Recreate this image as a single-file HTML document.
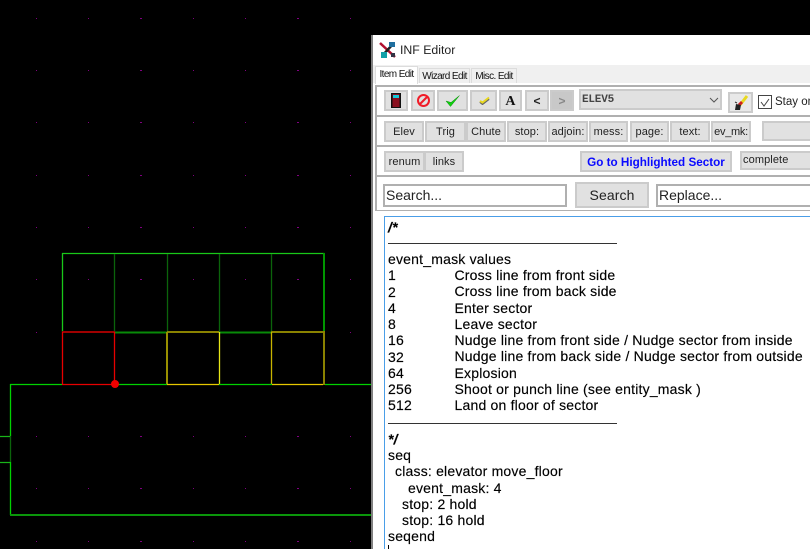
<!DOCTYPE html>
<html><head><meta charset="utf-8"><style>
html,body{margin:0;padding:0;background:#000}
#r{position:relative;width:810px;height:549px;overflow:hidden;background:#000;font-family:"Liberation Sans",sans-serif;color:#111}
#r div{position:absolute;box-sizing:border-box}
.b{background:#e1e1e1;border:2px solid #cbcbcb;text-align:center;font-size:11px;letter-spacing:.1px;line-height:19px;white-space:nowrap;overflow:hidden;color:#222}
.h{background:#b0b0b0;height:2px;left:375px;width:435px}
.tab{font-size:10px;letter-spacing:-.6px;text-align:center;white-space:nowrap;border:1px solid #dcdcdc;border-bottom:0}
.t{font-size:14px;line-height:16.25px;white-space:pre;letter-spacing:.2px;color:#000;-webkit-text-stroke:.15px #000}
svg{position:absolute}
</style></head><body><div id="r">
<svg width="372" height="549" style="left:0;top:0">
<defs><g id="d" fill="#800080" shape-rendering="crispEdges"><rect x="36" y="0" width="1" height="1"/><rect x="88" y="0" width="1" height="1"/><rect x="140" y="0" width="2" height="1"/><rect x="193" y="0" width="1" height="1"/><rect x="245" y="0" width="1" height="1"/><rect x="297" y="0" width="2" height="1"/><rect x="350" y="0" width="1" height="1"/></g></defs>
<use href="#d" y="18"/><use href="#d" y="70"/><use href="#d" y="122"/><use href="#d" y="175"/><use href="#d" y="227"/><use href="#d" y="279"/><use href="#d" y="332"/><use href="#d" y="436"/><use href="#d" y="488"/><use href="#d" y="541"/>
<g fill="none" stroke-width="1.3">
<path d="M62 253.5H324.500M62.500 253V332" stroke="#19c819"/>
<path d="M114.500 254V332M167.500 254V332M219.500 254V332M271.500 254V332" stroke="#0b640b"/>
<path d="M324 253V332" stroke="#009600" stroke-width="2"/>
<path d="M114 332.500H167M219 332.500H272" stroke="#088a08" stroke-width="2"/>
<path d="M62 332H115" stroke="#a00000" stroke-width="2"/>
<path d="M167 332H219M271 332H325" stroke="#8a8200" stroke-width="2"/>
<path d="M62.500 332V384M114.500 332V384M62 384.500H115" stroke="#e60000"/>
<path d="M167 332V384" stroke="#999000" stroke-width="2"/>
<path d="M219.500 332V384" stroke="#e6e619"/>
<path d="M271.500 332V384" stroke="#c8b400"/>
<path d="M324 332V385" stroke="#8a8200" stroke-width="2"/>
<path d="M167 384.500H219M272 384.500H323" stroke="#e6c800"/>
<path d="M10 384.500H62M115 384.500H167M219 384.500H272M325 384.500H372" stroke="#00d200"/>
<path d="M10.500 384V436M10.500 462V515" stroke="#00d200"/>
<path d="M10.500 436V462" stroke="#0b640b"/>
<path d="M0 436.500H10M0 462.500H10" stroke="#19b419"/>
<path d="M10 515H372" stroke="#0a960a" stroke-width="2"/>
</g>
</svg>
<svg width="12" height="12" style="left:108.500px;top:378px"><circle cx="6" cy="6" r="4" fill="#f00000"/></svg>

<div style="left:371px;top:35px;width:439px;height:514px;background:#fff;border-left:2px solid #808080"></div>
<div style="left:373px;top:65px;width:437px;height:18px;background:#f0f0f0"></div>
<svg width="18" height="18" viewBox="0 0 18 18" style="left:379px;top:41px">
<path d="M1 2L16 16" stroke="#b01030" stroke-width="2.500"/><path d="M3 15L14 3" stroke="#222" stroke-width="2.500"/>
<rect x="10" y="1" width="6" height="5" fill="#1f6f9f"/><rect x="2" y="11" width="6" height="6" fill="#12a0a8"/><rect x="12" y="12" width="4" height="4" fill="#334"/></svg>
<div style="left:400px;top:43px;font-size:12.300px;line-height:15px;color:#222;white-space:nowrap">INF Editor</div>
<div class="tab" style="left:375px;top:66px;width:43px;height:18px;background:#fff;line-height:16px">Item Edit</div>
<div class="tab" style="left:419px;top:68px;width:51px;height:15px;background:#f0f0f0;line-height:15px">Wizard Edit</div>
<div class="tab" style="left:471px;top:68px;width:46px;height:15px;background:#f0f0f0;line-height:15px">Misc. Edit</div>

<div style="left:375px;top:85px;width:2px;height:126px;background:#b0b0b0"></div>
<div class="h" style="top:85px"></div>
<div class="h" style="top:115px"></div>
<div class="h" style="top:145px"></div>
<div class="h" style="top:175px"></div>
<div style="left:375px;top:210px;width:435px;height:1px;background:#b0b0b0"></div>

<div class="b" style="left:384px;top:90px;width:24px;height:21px"></div>
<svg width="12" height="15" style="left:390px;top:93px"><rect x="1" y="0" width="10" height="15" fill="#111"/><rect x="2.500" y="1" width="7" height="13" fill="#8a1020"/><rect x="3" y="2" width="6" height="3" fill="#18c8d8"/></svg>
<div class="b" style="left:411px;top:90px;width:24px;height:21px"></div>
<svg width="15" height="15" style="left:415.500px;top:92.500px"><circle cx="7.500" cy="7.500" r="5.500" fill="none" stroke="#f01c28" stroke-width="2"/><path d="M3.500 11.500L11.500 3.500" stroke="#f01c28" stroke-width="2"/></svg>
<div class="b" style="left:437px;top:90px;width:31px;height:21px"></div>
<svg width="16" height="14" style="left:445px;top:94px"><path d="M1 7L5.500 12.500L14.500 1.500L6 8.500Z" fill="#10d010" stroke="#0a900a" stroke-width=".5"/></svg>
<div class="b" style="left:470px;top:90px;width:27px;height:21px"></div>
<svg width="11" height="9" style="left:478.500px;top:96px"><path d="M1 6L3.500 8L10 3" fill="none" stroke="#666" stroke-width="2"/><path d="M1 5L3.500 6.500L10 1.500" fill="none" stroke="#e8d820" stroke-width="2"/></svg>
<div class="b" style="left:499px;top:90px;width:23px;height:21px;font:bold 14px/19px 'Liberation Serif',serif;color:#111">A</div>
<div class="b" style="left:525px;top:90px;width:24px;height:21px;font-weight:bold;font-size:12px">&lt;</div>
<div class="b" style="left:550px;top:90px;width:24px;height:21px;background:#c8c8c8;color:#888;font-weight:bold;font-size:12px">&gt;</div>
<div class="b" style="left:579px;top:89px;width:143px;height:21px;text-align:left;padding-left:1px;font:bold 11px/18px 'Liberation Mono',monospace;letter-spacing:-.2px;color:#444">ELEV5</div>
<svg width="10" height="6" style="left:709px;top:97px"><path d="M1 1L5 5L9 1" fill="none" stroke="#555"/></svg>
<div class="b" style="left:728px;top:92px;width:25px;height:21px;background:#e8e8e8"></div>
<svg width="16" height="16" style="left:733px;top:95px"><path d="M7 10L14 1" stroke="#e8d820" stroke-width="3"/><path d="M6 10L9 7" stroke="#d02020" stroke-width="3"/><path d="M2 15L3 9L8 10L7 15Z" fill="#222"/><path d="M2 7L4 8" stroke="#333"/></svg>
<div style="left:758px;top:95px;width:14px;height:14px;border:1px solid #444;background:#fff"></div>
<svg width="10" height="9" style="left:760px;top:98px"><path d="M1 4L4 8L9 1" fill="none" stroke="#444"/></svg>
<div style="left:775px;top:95px;font-size:11.500px;line-height:15px;white-space:nowrap;color:#222">Stay on</div>

<div class="b" style="left:384px;top:121px;width:40px;height:21px">Elev</div>
<div class="b" style="left:425px;top:121px;width:41px;height:21px">Trig</div>
<div class="b" style="left:466px;top:121px;width:40px;height:21px">Chute</div>
<div class="b" style="left:507px;top:121px;width:40px;height:21px">stop:</div>
<div class="b" style="left:548px;top:121px;width:40px;height:21px">adjoin:</div>
<div class="b" style="left:589px;top:121px;width:39px;height:21px">mess:</div>
<div class="b" style="left:630px;top:121px;width:39px;height:21px">page:</div>
<div class="b" style="left:670px;top:121px;width:40px;height:21px">text:</div>
<div class="b" style="left:711px;top:121px;width:40px;height:21px;letter-spacing:-.3px">ev_mk:</div>
<div class="b" style="left:762px;top:121px;width:60px;height:20px"></div>

<div class="b" style="left:384px;top:151px;width:41px;height:21px">renum</div>
<div class="b" style="left:424px;top:151px;width:40px;height:21px">links</div>
<div class="b" style="left:580px;top:151px;width:152px;height:21px;color:#0a0aff;font-weight:bold;font-size:11.700px;letter-spacing:0">Go to Highlighted Sector</div>
<div class="b" style="left:740px;top:151px;width:80px;height:19px;text-align:left;padding-left:1px;line-height:15px;font-size:11px">complete</div>

<div style="left:383px;top:184px;width:184px;height:23px;border:2px solid #b0b0b0;background:#fff;font-size:14px;line-height:18px;padding-left:1px;color:#222">Search...</div>
<div class="b" style="left:575px;top:182px;width:74px;height:26px;font-size:14px;line-height:23px;color:#222">Search</div>
<div style="left:656px;top:184px;width:170px;height:23px;border:2px solid #b0b0b0;background:#fff;font-size:14px;line-height:18px;padding-left:1px;color:#222">Replace...</div>

<div style="left:384px;top:216px;width:440px;height:340px;border:1px solid #4a9ee8;border-right:0;background:#fff"></div>
<div class="t" style="left:388px;top:219px;font-weight:bold;font-style:italic">/*</div>
<div style="left:388px;top:243px;width:229px;height:1px;background:#333"></div>
<div class="t" style="left:388px;top:251px">event_mask values
1
2
4
8
16
32
64
256
512</div>
<div class="t" style="left:454.500px;top:267px">Cross line from front side
Cross line from back side
Enter sector
Leave sector
Nudge line from front side / Nudge sector from inside
Nudge line from back side / Nudge sector from outside
Explosion
Shoot or punch line (see entity_mask )
Land on floor of sector</div>
<div style="left:388px;top:423px;width:229px;height:1px;background:#333"></div>
<div class="t" style="left:388px;top:431px;font-weight:bold;font-style:italic">*/</div>
<div class="t" style="left:388px;top:447px">seq</div>
<div class="t" style="left:395px;top:463px">class: elevator move_floor</div>
<div class="t" style="left:408px;top:480px">event_mask: 4</div>
<div class="t" style="left:402px;top:496px">stop: 2 hold</div>
<div class="t" style="left:402px;top:512px">stop: 16 hold</div>
<div class="t" style="left:388px;top:528px">seqend</div>
<div style="left:388px;top:545px;width:1px;height:4px;background:#000"></div>
</div></body></html>
